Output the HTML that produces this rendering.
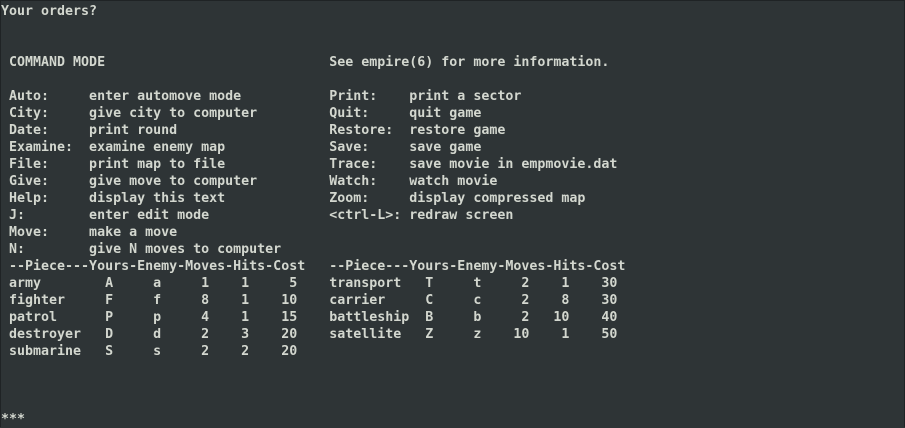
<!DOCTYPE html>
<html><head><meta charset="utf-8"><style>
html,body{margin:0;padding:0;width:905px;height:427px;overflow:hidden;background:#2e3436;}
.t{position:absolute;left:0;top:0;width:903px;height:426px;border-left:1px solid #1f2325;border-top:1px solid #1f2325;border-right:1px solid #1f2325;background:#2e3436;}
pre{margin:0;position:absolute;left:0px;top:2px;font-family:"DejaVu Sans Mono","Liberation Mono",monospace;font-size:13.3px;line-height:17px;font-weight:bold;color:#d3d7cf;}
</style></head><body><div class="t"><pre>Your orders?


 COMMAND MODE                            See empire(6) for more information.

 Auto:     enter automove mode           Print:    print a sector
 City:     give city to computer         Quit:     quit game
 Date:     print round                   Restore:  restore game
 Examine:  examine enemy map             Save:     save game
 File:     print map to file             Trace:    save movie in empmovie.dat
 Give:     give move to computer         Watch:    watch movie
 Help:     display this text             Zoom:     display compressed map
 J:        enter edit mode               &lt;ctrl-L&gt;: redraw screen
 Move:     make a move
 N:        give N moves to computer
 --Piece---Yours-Enemy-Moves-Hits-Cost   --Piece---Yours-Enemy-Moves-Hits-Cost
 army        A     a     1    1     5    transport   T     t     2    1    30
 fighter     F     f     8    1    10    carrier     C     c     2    8    30
 patrol      P     p     4    1    15    battleship  B     b     2   10    40
 destroyer   D     d     2    3    20    satellite   Z     z    10    1    50
 submarine   S     s     2    2    20



***</pre></div></body></html>
